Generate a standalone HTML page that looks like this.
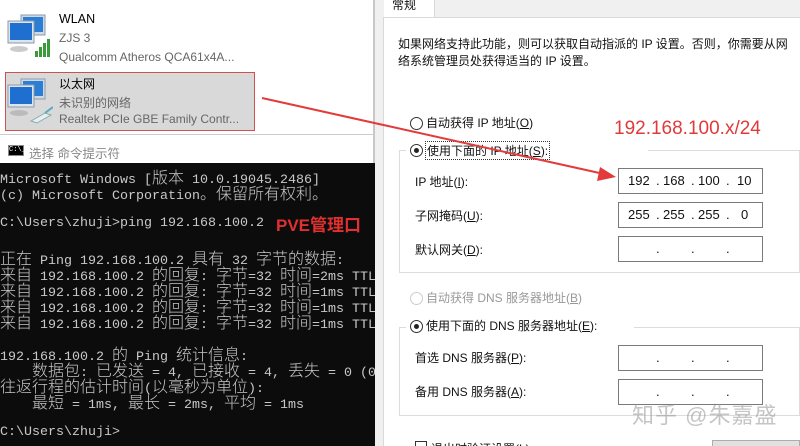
<!DOCTYPE html>
<html><head><meta charset="utf-8"><style>
*{margin:0;padding:0;box-sizing:border-box}
html,body{width:800px;height:446px;overflow:hidden}
body{position:relative;background:#f0f0f0;font-family:"Liberation Sans","Noto Sans CJK SC",sans-serif}
.a{position:absolute;white-space:nowrap}
#left{position:absolute;left:0;top:0;width:375px;height:446px;background:#fff;border-right:2px solid #c8c8c8}
#con{position:absolute;left:0;top:163px;width:375px;height:283px;background:#0c0c0c;color:#c8c8c8;font-family:"Liberation Mono","Noto Sans CJK SC",monospace;font-size:13.33px;overflow:hidden}
#con div{position:absolute;left:0;white-space:pre;height:16px;line-height:16px}
#con span{font-size:16px;font-family:"Noto Sans CJK SC",sans-serif;font-weight:300}
#dlg{position:absolute;left:383px;top:17px;width:417px;height:429px;background:#fff;border-left:1px solid #d9d9d9;border-top:1px solid #d9d9d9}
.t{font-size:12px;color:#111}
.radio{position:absolute;width:13px;height:13px;border:1px solid #333;border-radius:50%;background:#fff}
.radio.on::after{content:"";position:absolute;left:3px;top:3px;width:5px;height:5px;border-radius:50%;background:#222}
.box{position:absolute;left:618px;width:145px;height:26px;border:1px solid #7a7a7a;background:#fff;font-size:13px;color:#111;line-height:24px}
.box i{position:absolute;font-style:normal;top:0}
.grp{position:absolute;border:1px solid #dcdcdc}
</style></head><body>
<div id="left">
 <svg class="a" style="left:5px;top:13px" width="48" height="48" viewBox="0 0 48 48">
  <rect x="16" y="2" width="24" height="20" fill="#cfd9e4" stroke="#8a9ab0"/><rect x="18" y="4" width="20" height="15" fill="#2a7fd4"/>
  <rect x="3" y="8" width="26" height="22" fill="#dde4ec" stroke="#8a9ab0"/><rect x="5" y="10" width="22" height="17" fill="#1e6fd0"/>
  <ellipse cx="14" cy="36" rx="9" ry="3" fill="#ccc"/>
  <rect x="30" y="38" width="3" height="6" fill="#3a9a3a"/><rect x="34" y="34" width="3" height="10" fill="#3a9a3a"/><rect x="38" y="30" width="3" height="14" fill="#3a9a3a"/><rect x="42" y="26" width="3" height="18" fill="#3a9a3a"/>
 </svg>
 <div class="a t" style="left:59px;top:12px;font-size:12.5px;color:#000">WLAN</div>
 <div class="a t" style="left:59px;top:31px;color:#666">ZJS 3</div>
 <div class="a t" style="left:59px;top:50px;color:#666">Qualcomm Atheros QCA61x4A...</div>
 <div class="a" style="left:5px;top:72px;width:250px;height:59px;background:#d9d9d9;border:1px solid #d05050"></div>
 <svg class="a" style="left:5px;top:77px" width="48" height="48" viewBox="0 0 48 48">
  <rect x="16" y="2" width="24" height="20" fill="#cfd9e4" stroke="#8a9ab0"/><rect x="18" y="4" width="20" height="15" fill="#2a7fd4"/>
  <rect x="3" y="8" width="26" height="22" fill="#dde4ec" stroke="#8a9ab0"/><rect x="5" y="10" width="22" height="17" fill="#1e6fd0"/>
  <ellipse cx="14" cy="36" rx="9" ry="3" fill="#bbb"/>
  <path d="M26 44 L40 36 L46 38 L32 46 Z" fill="#e8eef4" stroke="#8aa" /><path d="M40 36 L48 30" stroke="#5ab" stroke-width="2"/>
 </svg>
 <div class="a t" style="left:59px;top:75px;color:#000">以太网</div>
 <div class="a t" style="left:59px;top:94px;color:#666">未识别的网络</div>
 <div class="a t" style="left:59px;top:112px;color:#666">Realtek PCIe GBE Family Contr...</div>
 <div class="a" style="left:0;top:134px;width:375px;height:1px;background:#ccc"></div>
 <div class="a" style="left:8px;top:145px;width:16px;height:11px;background:#000;border:1px solid #888;color:#fff;font-size:7px;line-height:9px;font-family:'Liberation Mono',monospace">C:\_</div>
 <div class="a t" style="left:29px;top:143px;color:#888;font-size:12.5px">选择 命令提示符</div>
</div>
<div id="con">
 <div style="top:5px">Microsoft Windows [<span>版本</span> 10.0.19045.2486]</div>
 <div style="top:21px">(c) Microsoft Corporation<span>。保留所有权利。</span></div>
 <div style="top:53px">C:\Users\zhuji&gt;ping 192.168.100.2</div>
 <div style="top:86px"><span>正在</span> Ping 192.168.100.2 <span>具有</span> 32 <span>字节的数据</span>:</div>
 <div style="top:102px"><span>来自</span> 192.168.100.2 <span>的回复</span>: <span>字节</span>=32 <span>时间</span>=2ms TTL</div>
 <div style="top:118px"><span>来自</span> 192.168.100.2 <span>的回复</span>: <span>字节</span>=32 <span>时间</span>=1ms TTL</div>
 <div style="top:134px"><span>来自</span> 192.168.100.2 <span>的回复</span>: <span>字节</span>=32 <span>时间</span>=1ms TTL</div>
 <div style="top:150px"><span>来自</span> 192.168.100.2 <span>的回复</span>: <span>字节</span>=32 <span>时间</span>=1ms TTL</div>
 <div style="top:182px">192.168.100.2 <span>的</span> Ping <span>统计信息</span>:</div>
 <div style="top:198px">    <span>数据包</span>: <span>已发送</span> = 4, <span>已接收</span> = 4, <span>丢失</span> = 0 (0</div>
 <div style="top:214px"><span>往返行程的估计时间</span>(<span>以毫秒为单位</span>):</div>
 <div style="top:230px">    <span>最短</span> = 1ms, <span>最长</span> = 2ms, <span>平均</span> = 1ms</div>
 <div style="top:262px">C:\Users\zhuji&gt;</div>
 <div style="top:50px;left:276px;color:#e03030;font-family:'Liberation Sans','Noto Sans CJK SC',sans-serif;font-size:17px;font-weight:bold;height:22px;line-height:22px">PVE<span style="font-size:17px;font-weight:bold;font-family:'Noto Sans CJK SC',sans-serif">管理口</span></div>
</div>
<div class="a" style="left:384px;top:0;width:51px;height:19px;background:#fff;border-right:1px solid #d9d9d9"></div>
<div class="a t" style="left:392px;top:-4px">常规</div>
<div id="dlg"></div>
<div class="a t" style="left:398px;top:35px">如果网络支持此功能，则可以获取自动指派的 IP 设置。否则，你需要从网</div>
<div class="a t" style="left:398px;top:52px">络系统管理员处获得适当的 IP 设置。</div>
<div class="grp" style="left:399px;top:150px;width:401px;height:123px"></div>
<div class="grp" style="left:399px;top:327px;width:401px;height:89px"></div>
<div class="radio" style="left:410px;top:117px"></div>
<div class="a t" style="left:426px;top:114px">自动获得 IP 地址(<u>O</u>)</div>
<div class="a" style="left:406px;top:141px;width:242px;height:18px;background:#fff"></div>
<div class="radio on" style="left:410px;top:144px"></div>
<div class="a t" style="left:425px;top:141px;border:1px dotted #333;padding:0 1px">使用下面的 IP 地址(<u>S</u>):</div>
<div class="a" style="left:614px;top:118px;font-size:19px;color:#e03a3a">192.168.100.x/24</div>
<div class="a t" style="left:415px;top:173px">IP 地址(<u>I</u>):</div>
<div class="a t" style="left:415px;top:207px">子网掩码(<u>U</u>):</div>
<div class="a t" style="left:415px;top:241px">默认网关(<u>D</u>):</div>
<div class="box" style="top:168px"><i style="left:9px">192</i><i style="left:37px">.</i><i style="left:44px">168</i><i style="left:72px">.</i><i style="left:79px">100</i><i style="left:107px">.</i><i style="left:118px">10</i></div>
<div class="box" style="top:202px"><i style="left:9px">255</i><i style="left:37px">.</i><i style="left:44px">255</i><i style="left:72px">.</i><i style="left:79px">255</i><i style="left:107px">.</i><i style="left:122px">0</i></div>
<div class="box" style="top:236px"><i style="left:37px">.</i><i style="left:72px">.</i><i style="left:107px">.</i></div>
<div class="radio" style="left:410px;top:292px;border-color:#ccc"></div>
<div class="a t" style="left:426px;top:289px;color:#999">自动获得 DNS 服务器地址(<u>B</u>)</div>
<div class="a" style="left:406px;top:318px;width:228px;height:18px;background:#fff"></div>
<div class="radio on" style="left:410px;top:320px"></div>
<div class="a t" style="left:426px;top:317px">使用下面的 DNS 服务器地址(<u>E</u>):</div>
<div class="a t" style="left:415px;top:349px">首选 DNS 服务器(<u>P</u>):</div>
<div class="a t" style="left:415px;top:383px">备用 DNS 服务器(<u>A</u>):</div>
<div class="box" style="top:345px"><i style="left:37px">.</i><i style="left:72px">.</i><i style="left:107px">.</i></div>
<div class="box" style="top:379px"><i style="left:37px">.</i><i style="left:72px">.</i><i style="left:107px">.</i></div>
<div class="a" style="left:632px;top:398px;font-size:22px;color:rgba(150,150,150,.55);letter-spacing:1px">知乎 @朱嘉盛</div>
<div class="a" style="left:415px;top:441px;width:12px;height:12px;border:1px solid #333;background:#fff"></div>
<div class="a t" style="left:431px;top:440px">退出时验证设置(L)</div>
<div class="a" style="left:712px;top:440px;width:88px;height:20px;background:#e1e1e1;border:1px solid #adadad"></div>
<svg class="a" style="left:0;top:0" width="800" height="446">
 <line x1="262" y1="98" x2="604" y2="174" stroke="#e23b3b" stroke-width="2"/>
 <polygon points="616,177 600,167 597,181" fill="#e23b3b"/>
</svg>
</body></html>
